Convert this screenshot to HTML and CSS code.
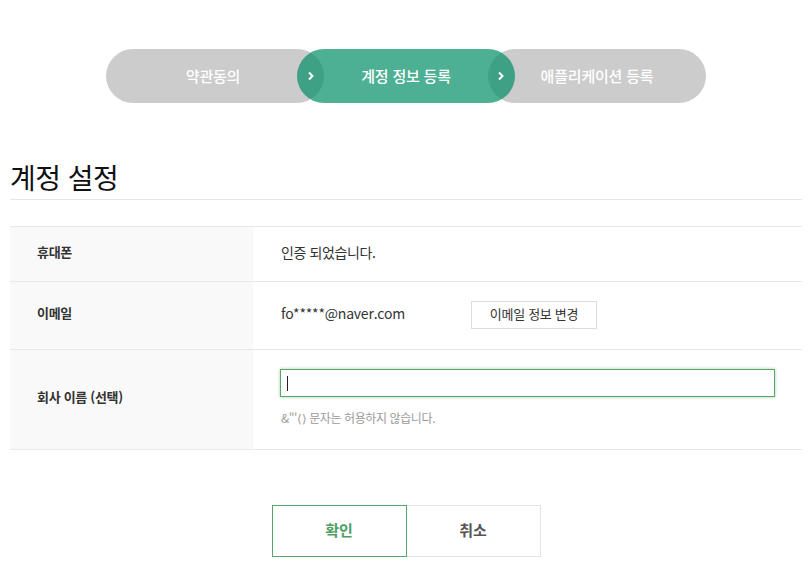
FILE: index.html
```html
<!DOCTYPE html>
<html lang="ko">
<head>
<meta charset="utf-8">
<title>계정 설정</title>
<link rel="stylesheet" href="styles.css">
</head>
<body>
<div class="page">
  <div class="steps">
    <div class="step step-done">약관동의</div>
    <div class="step step-active">
      <span class="chev chev-left"><svg width="8" height="10" viewBox="0 0 8 10"><path d="M2 1.5 L5.5 5 L2 8.5" fill="none" stroke="#fff" stroke-width="2"/></svg></span>
      계정 정보 등록
      <span class="chev chev-right"><svg width="8" height="10" viewBox="0 0 8 10"><path d="M2 1.5 L5.5 5 L2 8.5" fill="none" stroke="#fff" stroke-width="2"/></svg></span>
    </div>
    <div class="step step-next">애플리케이션 등록</div>
  </div>

  <h2 class="title">계정 설정</h2>

  <div class="form">
    <div class="row row-phone">
      <div class="label">휴대폰</div>
      <div class="value">인증 되었습니다.</div>
    </div>
    <div class="row row-email">
      <div class="label">이메일</div>
      <div class="value">
        <span class="email">fo*****@naver.com</span>
        <button class="btn-small" type="button">이메일 정보 변경</button>
      </div>
    </div>
    <div class="row row-company">
      <div class="label">회사 이름 (선택)</div>
      <div class="value value-col">
        <div class="input"><span class="caret"></span></div>
        <p class="hint">&amp;"'⟨⟩ 문자는 허용하지 않습니다.</p>
      </div>
    </div>
  </div>

  <div class="actions">
    <button class="btn btn-ok" type="button">확인</button>
    <button class="btn btn-cancel" type="button">취소</button>
  </div>
</div>
</body>
</html>
```

FILE: styles.css
```css
* { box-sizing: border-box; }
html, body { margin: 0; padding: 0; background: #fff; }
body {
  font-family: "Noto Sans CJK KR", "Noto Sans", sans-serif;
  color: #333;
}
.page { width: 812px; padding: 0 10px; }

.steps {
  display: flex;
  justify-content: center;
  margin-top: 49px;
  height: 54px;
}
.step {
  position: relative;
  width: 218px;
  height: 54px;
  border-radius: 27px;
  display: flex;
  align-items: center;
  justify-content: center;
  color: #fff;
  font-size: 15px;
  font-weight: 500;
  letter-spacing: -0.2px;
  background: #cccccc;
  padding-bottom: 2px;
}
.step + .step { margin-left: -27px; }
.step-active {
  z-index: 2;
  background: rgba(1, 141, 101, 0.7);
}
.step-done { padding-right: 4px; }
.step-next { padding-left: 0; }
.chev {
  position: absolute;
  top: 50%;
  width: 8px;
  height: 10px;
  margin-top: -5px;
  display: flex;
}
.chev-left { left: 10px; }
.chev-right { left: 200px; }

.title {
  margin: 57px 0 0;
  padding-bottom: 4px;
  line-height: 35px;
  font-size: 28px;
  font-weight: 400;
  color: #111;
  letter-spacing: -0.5px;
  border-bottom: 1px solid #e6e6e6;
}

.form {
  margin-top: 26px;
  border-top: 1px solid #e8e8e8;
}
.row {
  display: grid;
  grid-template-columns: 243px 1fr;
  border-bottom: 1px solid #e8e8e8;
}
.row-phone { height: 55px; }
.row-email { height: 68px; }
.row-company { height: 100px; }
.label {
  background: #f9f9f9;
  padding-left: 27px;
  padding-bottom: 6px;
  display: flex;
  align-items: center;
  font-size: 13px;
  font-weight: 700;
  color: #333;
  letter-spacing: -0.3px;
}
.value {
  padding-left: 28px;
  padding-bottom: 5px;
  display: flex;
  align-items: center;
  font-size: 14px;
  color: #333;
  letter-spacing: -0.4px;
}
.email { width: 190px; letter-spacing: -0.2px; }
.btn-small {
  height: 28px;
  width: 126px;
  margin-top: 3px;
  background: #fff;
  border: 1px solid #dcdcdc;
  font-family: inherit;
  font-size: 13px;
  color: #333;
  letter-spacing: -0.3px;
  padding: 0 0 2px;
  cursor: pointer;
}
.value-col {
  flex-direction: column;
  align-items: flex-start;
  justify-content: flex-start;
  padding-top: 19px;
  padding-left: 27px;
  padding-bottom: 0;
}
.input {
  width: 495px;
  height: 28px;
  border: 1px solid #5aa469;
  box-shadow: 0 0 3px rgba(90, 180, 100, 0.6);
  background: #fff;
  display: flex;
  align-items: center;
  padding-left: 6px;
}
.caret {
  width: 1px;
  height: 15px;
  background: #222;
}
.hint {
  margin: 11px 0 0 1px;
  font-size: 12px;
  color: #9a9a9a;
  letter-spacing: -0.4px;
  line-height: 20px;
}

.actions {
  display: flex;
  justify-content: center;
  margin-top: 55px;
}
.btn {
  width: 135px;
  height: 52px;
  background: #fff;
  font-family: inherit;
  font-size: 15px;
  font-weight: 700;
  padding: 0 0 3px;
  cursor: pointer;
}
.btn-ok {
  border: 1px solid #5aa469;
  color: #4e9e62;
}
.btn-cancel {
  width: 134px;
  border: 1px solid #e3e3e3;
  border-left: 0;
  color: #555;
}
```
